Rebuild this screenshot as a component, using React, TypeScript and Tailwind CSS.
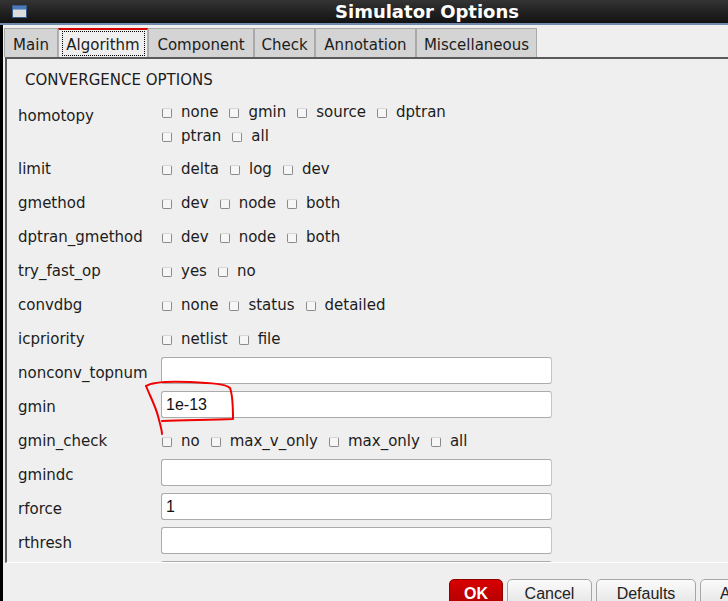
import React from "react";

const F = "font-['DejaVu_Sans',sans-serif]";

function Box() {
  return (
    <span className="inline-block w-[10px] h-[10px] shrink-0 rounded-[2px] border border-[#8a8a8a] border-t-[#d6d6d6] bg-[#f6f6f6] translate-y-[1px]" />
  );
}

function Opt({ label }: { label: string }) {
  return (
    <span className="flex items-center gap-[9px]">
      <Box />
      <span>{label}</span>
    </span>
  );
}

function Opts({ items }: { items: string[] }) {
  return (
    <div className="flex items-center gap-[11px] pl-[1px]">
      {items.map((i) => (
        <Opt key={i} label={i} />
      ))}
    </div>
  );
}

function CheckRow({ label, items }: { label: string; items: string[] }) {
  return (
    <div className="flex items-center h-[34px] shrink-0">
      <div className="w-[143px] shrink-0">{label}</div>
      <Opts items={items} />
    </div>
  );
}

function InputRow({ label, value }: { label: string; value?: string }) {
  return (
    <div className="flex items-start h-[34px] pt-[1px] shrink-0">
      <div className="w-[143px] shrink-0 mt-[7px]">{label}</div>
      <div className="w-[391px] h-[27px] shrink-0 rounded-[3px] border border-[#ababab] border-r-[#c4c4c4] bg-white flex items-center pl-[4px] font-['Liberation_Sans',sans-serif] text-[16px] text-[#111]">
        {value}
      </div>
    </div>
  );
}

function Tab({ label, w, selected }: { label: string; w: string; selected?: boolean }) {
  if (selected) {
    return (
      <div className={`${w} shrink-0 flex items-start justify-center pt-[1px] bg-[#efefef] border-x border-[#b0b0b0] border-t-2 border-t-[#d40000]`}>
        <span className="w-[83px] h-[25px] flex items-center justify-center pt-[2px] border border-dotted border-black">
          {label}
        </span>
      </div>
    );
  }
  return (
    <div className={`${w} shrink-0 flex items-center justify-center pt-[3px] bg-[#d4d4d4] border border-b-0 border-[#a9a9a9]`}>
      {label}
    </div>
  );
}

function Btn({ label, w, ok }: { label: string; w: string; ok?: boolean }) {
  return (
    <div
      className={
        ok
          ? `${w} h-[28px] shrink-0 rounded-[5px] border border-[#8c0000] bg-linear-to-b from-[#d80000] to-[#b00000] text-white font-bold flex items-center justify-center pt-[1px]`
          : `${w} h-[28px] shrink-0 rounded-[5px] border border-[#a6a6a6] bg-linear-to-b from-[#fbfbfb] to-[#e4e4e4] text-[#222] flex items-center justify-center pt-[1px]`
      }
    >
      {label}
    </div>
  );
}

export default function App() {
  return (
    <div className={`relative w-[728px] h-[601px] overflow-hidden bg-[#efefef] flex flex-col ${F} text-[15px] leading-[18px] text-[#1c1c1c]`}>
      {/* title bar */}
      <div className="w-[854px] h-[23px] shrink-0 grid grid-cols-[1fr_auto_1fr] items-center bg-linear-to-b from-[#343434] to-[#121212]">
        <div className="pl-[12px] flex items-center">
          <svg width="15" height="13" viewBox="0 0 15 13">
            <rect x="0.5" y="0.5" width="14" height="12" fill="#dcdcdc" stroke="#3a5a8c" />
            <rect x="1" y="1" width="13" height="3" fill="#4a78b8" />
            <rect x="1" y="4" width="13" height="1" fill="#8aa6cc" />
          </svg>
        </div>
        <div className="text-white font-bold text-[18px] leading-[22px]">Simulator Options</div>
        <div />
      </div>
      <div className="h-[2px] shrink-0 bg-[#7189ad]" />
      <div className="flex-1 flex min-h-0">
        <div className="w-[3px] shrink-0 bg-black" />
        <div className="flex-1 flex flex-col pt-[3px] min-w-0">
          {/* tabs */}
          <div className="flex h-[29px] pl-[1px] shrink-0">
            <Tab label="Main" w="w-[54px]" />
            <Tab label="Algorithm" w="w-[90px]" selected />
            <Tab label="Component" w="w-[106px]" />
            <Tab label="Check" w="w-[61px]" />
            <Tab label="Annotation" w="w-[101px]" />
            <Tab label="Miscellaneous" w="w-[121px]" />
          </div>
          {/* panel */}
          <div className="ml-[2px] h-[506px] shrink-0 overflow-hidden border-t-2 border-l-2 border-b border-t-[#5a5a5a] border-l-[#5a5a5a] border-b-white bg-[#efefef]">
            <div className="pl-[11px] pt-[12px] flex flex-col">
              <div className="pl-[7px]">CONVERGENCE OPTIONS</div>
              <div className="flex mt-[11px] shrink-0">
                <div className="w-[143px] shrink-0 pt-[7px]">homotopy</div>
                <div className="flex flex-col">
                  <div className="h-[24px] flex items-center">
                    <Opts items={["none", "gmin", "source", "dptran"]} />
                  </div>
                  <div className="h-[24px] flex items-center">
                    <Opts items={["ptran", "all"]} />
                  </div>
                </div>
              </div>
              <div className="h-[4px] shrink-0" />
              <CheckRow label="limit" items={["delta", "log", "dev"]} />
              <CheckRow label="gmethod" items={["dev", "node", "both"]} />
              <CheckRow label="dptran_gmethod" items={["dev", "node", "both"]} />
              <CheckRow label="try_fast_op" items={["yes", "no"]} />
              <CheckRow label="convdbg" items={["none", "status", "detailed"]} />
              <CheckRow label="icpriority" items={["netlist", "file"]} />
              <InputRow label="nonconv_topnum" />
              <InputRow label="gmin" value="1e-13" />
              <CheckRow label="gmin_check" items={["no", "max_v_only", "max_only", "all"]} />
              <InputRow label="gmindc" />
              <InputRow label="rforce" value="1" />
              <InputRow label="rthresh" />
              <InputRow label="" />
            </div>
          </div>
          {/* buttons */}
          <div className="flex gap-[4px] pl-[446px] pt-[16px] font-['Liberation_Sans',sans-serif] text-[16px]">
            <Btn label="OK" w="w-[54px]" ok />
            <Btn label="Cancel" w="w-[85px]" />
            <Btn label="Defaults" w="w-[100px]" />
            <Btn label="Apply" w="w-[80px]" />
          </div>
        </div>
      </div>
      {/* red freehand annotation */}
      <svg className="absolute left-0 top-0 pointer-events-none" width="728" height="601" viewBox="0 0 728 601">
        <path
          d="M146,386 C152,382 168,381 190,382 C212,383 226,384 230,388 C233,396 233,408 233,419 C210,420 186,420 162,421"
          fill="none"
          stroke="#f00000"
          strokeWidth="2"
          strokeLinecap="round"
          strokeLinejoin="round"
        />
        <path
          d="M146,386 C150,396 155,405 158,416 C160,424 162,430 162,434"
          fill="none"
          stroke="#f00000"
          strokeWidth="2"
          strokeLinecap="round"
        />
      </svg>
    </div>
  );
}
